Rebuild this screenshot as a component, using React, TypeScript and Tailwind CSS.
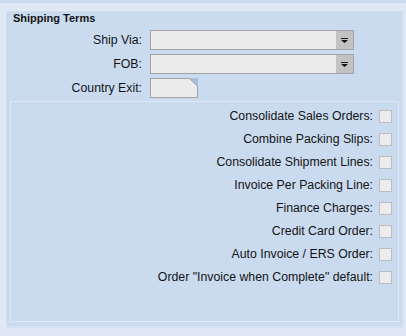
import React from "react";

const options = [
  "Consolidate Sales Orders:",
  "Combine Packing Slips:",
  "Consolidate Shipment Lines:",
  "Invoice Per Packing Line:",
  "Finance Charges:",
  "Credit Card Order:",
  "Auto Invoice / ERS Order:",
  'Order "Invoice when Complete" default:',
];

function DropArrow() {
  return (
    <svg width="7" height="5" viewBox="0 0 7 5" aria-hidden="true">
      <rect x="0" y="0" width="7" height="1" fill="#111" />
      <path d="M0 2h7L3.5 5z" fill="#111" />
    </svg>
  );
}

function Select() {
  return (
    <div className="flex h-[20px] w-[204px] border border-[#a3a3a3] bg-[#ebebeb]">
      <div className="flex-1" />
      <div className="flex w-[17px] items-center justify-center bg-[#c2c2c2]">
        <DropArrow />
      </div>
    </div>
  );
}

function FieldRow({ label, children }: { label: string; children: React.ReactNode }) {
  return (
    <div className="flex items-center">
      <span className="w-[140px] pr-[8px] text-right">{label}</span>
      {children}
    </div>
  );
}

export default function App() {
  return (
    <div
      className="flex h-[336px] w-[406px] flex-col bg-[#dfe8f5] text-[12.3px] text-[#141414]"
      style={{ fontFamily: '"Liberation Sans", Arial, sans-serif' }}
    >
      <div className="h-[3px] bg-[#cadaef]" />
      <div className="flex flex-1 pb-[8px] pl-[5px] pr-[2px] pt-[7px]">
        <div className="flex flex-1 flex-col border-t border-l border-[#e6edf8] border-b-2 border-r-2 border-b-[#d6e2f2] border-r-[#d6e2f2] bg-[#cadbf0] pb-[4px] pl-[4px] pr-[3px]">
          <div className="pl-[3px] pt-[1px] text-[11px] font-bold leading-[13px]">Shipping Terms</div>
          <div className="mt-[5px] flex flex-col gap-[4px]">
            <FieldRow label="Ship Via:">
              <Select />
            </FieldRow>
            <FieldRow label="FOB:">
              <Select />
            </FieldRow>
            <FieldRow label="Country Exit:">
              <div className="relative h-[20px] w-[48px] border border-[#a3a3a3] bg-[#ebebeb]">
                <svg className="absolute right-[-1px] top-[-1px]" width="9" height="9" viewBox="0 0 9 9" aria-hidden="true">
                  <path d="M0 0h9v9z" fill="#a9c0dd" />
                  <path d="M0 0L9 9" stroke="#9aa9bb" strokeWidth="1" />
                </svg>
              </div>
            </FieldRow>
          </div>
          <div className="mt-[3px] flex flex-1 flex-col border border-[#dfe8f5] pr-[6px] pt-[3px]">
            {options.map((o) => (
              <div key={o} className="flex h-[23px] items-center justify-end gap-[6px]">
                <span>{o}</span>
                <div className="h-[13px] w-[13px] border border-[#bdbdbd] bg-[#ececec]" />
              </div>
            ))}
          </div>
        </div>
      </div>
    </div>
  );
}
